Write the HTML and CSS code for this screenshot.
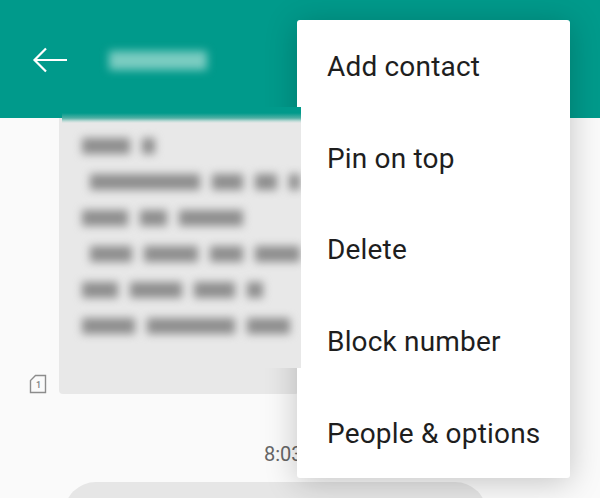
FILE: index.html
```html
<!DOCTYPE html>
<html lang="en">
<head>
<meta charset="utf-8">
<title>Conversation</title>
<link rel="stylesheet" href="styles.css">
</head>
<body>
<div class="screen">
  <header class="appbar">
    <svg class="back" viewBox="0 0 36 28" width="36" height="28" aria-label="Back"><path d="M35 14H3M14 2.500 2.500 14 14 25.500" fill="none" stroke="#fff" stroke-width="2.200"/></svg>
    <div class="name-blur"></div>
  </header>
  <main class="chat">
    <div class="message">
      <svg class="sim" viewBox="0 0 18 20" width="18" height="20"><path d="M6.500 1.500H16.500V18.500H1.500V6.500Z" fill="none" stroke="#8c8c8c" stroke-width="1.400"/><text x="9.500" y="13.500" class="sim-num">1</text></svg>
      <div class="bubble"></div>
    </div>
    <div class="time">8:03 AM</div>
    <div class="next-bubble"></div>
  </main>
  <nav class="menu">
    <div class="menu-item">Add contact</div>
    <div class="menu-item">Pin on top</div>
    <div class="menu-item">Delete</div>
    <div class="menu-item">Block number</div>
    <div class="menu-item">People &amp; options</div>
  </nav>
  <div class="patch">
    <div class="lines">
      <div class="line"><i class="w48"></i><i class="w13"></i></div>
      <div class="line indent"><i class="w110"></i><i class="w31"></i><i class="w22"></i><i class="w11"></i></div>
      <div class="line"><i class="w46"></i><i class="w27"></i><i class="w64"></i></div>
      <div class="line indent"><i class="w42"></i><i class="w54"></i><i class="w33"></i><i class="w45"></i></div>
      <div class="line"><i class="w36"></i><i class="w52"></i><i class="w41"></i><i class="w16"></i></div>
      <div class="line"><i class="w53"></i><i class="w88"></i><i class="w43"></i></div>
    </div>
  </div>
</div>
</body>
</html>
```
FILE: styles.css
```css
* { box-sizing: border-box; }
html, body { margin: 0; padding: 0; }
body { width: 600px; height: 498px; overflow: hidden; background: #fafafa; font-family: Roboto, "Liberation Sans", sans-serif; }
.screen { position: relative; width: 600px; height: 498px; overflow: hidden; background: #fafafa; }

.appbar { height: 118px; background: #009a8b; display: flex; align-items: center; padding: 0 0 0 32px; gap: 41px; }
.back { flex: none; margin-top: 2px; }
.name-blur { width: 98px; height: 19px; margin-top: 2px; background: #7accc1; filter: blur(4px); }

.chat { display: flex; flex-direction: column; }
.message { display: flex; align-items: flex-end; padding: 0 0 0 29px; gap: 12px; }
.sim { flex: none; display: block; }
.sim-num { font: 500 9px Roboto, sans-serif; fill: #808080; text-anchor: middle; }
.bubble { width: 240px; height: 276px; background: #e8e8e8; border-radius: 0 0 4px 4px; }
.time { margin: 48px 0 0 264px; font-size: 20px; line-height: 24px; color: #666; white-space: nowrap; }
.next-bubble { width: 423px; height: 80px; margin: 16px 0 0 64px; background: #e6e6e6; border-radius: 32px; }

.menu { position: absolute; left: 297px; top: 20px; width: 273px; height: 458px; padding-top: 1px; background: #fff; border-radius: 3px; box-shadow: 0 4px 32px rgba(0,0,0,.22); display: flex; flex-direction: column; }
.menu-item { height: 91.600px; flex: none; display: flex; align-items: center; padding-left: 30px; font-size: 28px; letter-spacing: .18px; color: #1e1e1e; white-space: nowrap; }

.patch { position: absolute; left: 62px; top: 107px; width: 239px; height: 261px; overflow: hidden; background: linear-gradient(#009a8b 0, #009a8b 6px, #4fb0a4 11px, #bcdad6 14px, #e8e8e8 16px); }
.lines { display: flex; flex-direction: column; gap: 20px; padding: 31px 0 0 20px; filter: blur(4px); }
.line { display: flex; gap: 12px; height: 16px; flex: none; }
.line.indent { padding-left: 8px; }
.line i { display: block; height: 100%; flex: none; background: #8e8e8e; }
.w11 { width: 11px; } .w13 { width: 13px; } .w16 { width: 16px; } .w22 { width: 22px; }
.w27 { width: 27px; } .w31 { width: 31px; } .w33 { width: 33px; } .w36 { width: 36px; }
.w41 { width: 41px; } .w42 { width: 42px; } .w43 { width: 43px; } .w45 { width: 45px; }
.w46 { width: 46px; } .w48 { width: 48px; } .w52 { width: 52px; } .w53 { width: 53px; }
.w54 { width: 54px; } .w64 { width: 64px; } .w88 { width: 88px; } .w110 { width: 110px; }
```
